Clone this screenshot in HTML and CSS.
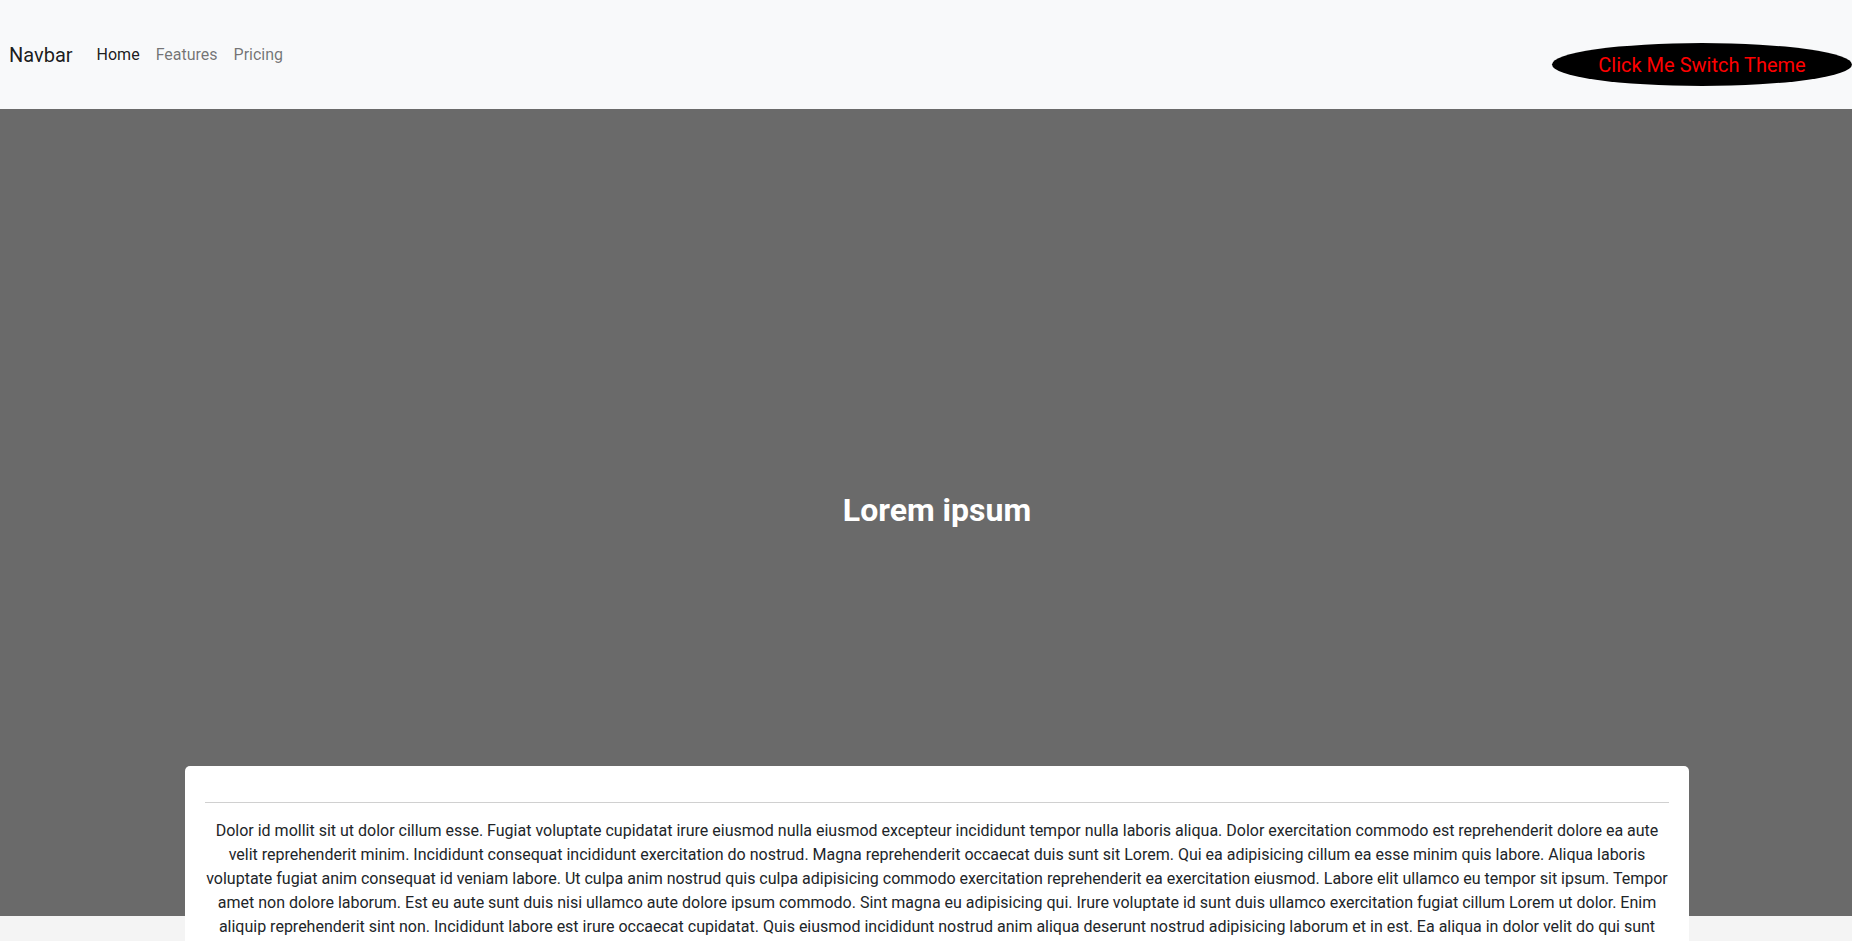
FILE: index.html
```html
<!DOCTYPE html>
<html lang="en">
<head>
<meta charset="utf-8">
<title>Navbar</title>
<link rel="stylesheet" href="styles.css">
</head>
<body>
<nav class="navbar">
  <div class="nav-left">
    <a class="brand" href="#">Navbar</a>
    <ul class="nav">
      <li><a class="nav-link active" href="#">Home</a></li>
      <li><a class="nav-link" href="#">Features</a></li>
      <li><a class="nav-link" href="#">Pricing</a></li>
    </ul>
  </div>
  <button class="theme-btn" type="button">Click Me Switch Theme</button>
</nav>
<section class="hero">
  <h1 class="hero-title">Lorem ipsum</h1>
</section>
<main class="content">
  <div class="card">
    <hr class="divider">
    <p class="card-text">Dolor id mollit sit ut dolor cillum esse. Fugiat voluptate cupidatat irure eiusmod nulla eiusmod excepteur incididunt tempor nulla laboris aliqua. Dolor exercitation commodo est reprehenderit dolore ea aute velit reprehenderit minim. Incididunt consequat incididunt exercitation do nostrud. Magna reprehenderit occaecat duis sunt sit Lorem. Qui ea adipisicing cillum ea esse minim quis labore. Aliqua laboris voluptate fugiat anim consequat id veniam labore. Ut culpa anim nostrud quis culpa adipisicing commodo exercitation reprehenderit ea exercitation eiusmod. Labore elit ullamco eu tempor sit ipsum. Tempor amet non dolore laborum. Est eu aute sunt duis nisi ullamco aute dolore ipsum commodo. Sint magna eu adipisicing qui. Irure voluptate id sunt duis ullamco exercitation fugiat cillum Lorem ut dolor. Enim aliquip reprehenderit sint non. Incididunt labore est irure occaecat cupidatat. Quis eiusmod incididunt nostrud anim aliqua deserunt nostrud adipisicing laborum et in est. Ea aliqua in dolor velit do qui sunt excepteur. Officia magna consequat nulla cillum proident. Nostrud ad sint labore ipsum laboris veniam consectetur aliquip commodo nulla.</p>
  </div>
</main>
</body>
</html>
```
FILE: styles.css
```css
html, body {
  margin: 0;
  padding: 0;
}
body {
  font-family: Roboto, "Liberation Sans", sans-serif;
  background: #f4f4f4;
  color: #212529;
  overflow-x: hidden;
}
.navbar {
  display: flex;
  align-items: center;
  justify-content: space-between;
  height: 109px;
  padding-left: 9px;
  background: #f8f9fa;
  box-sizing: border-box;
}
.nav-left {
  display: flex;
  align-items: center;
}
.brand {
  font-size: 20px;
  line-height: 30px;
  color: rgba(0, 0, 0, 0.9);
  text-decoration: none;
  margin-right: 16px;
}
.nav {
  display: flex;
  list-style: none;
  margin: 0;
  padding: 0;
}
.nav-link {
  display: block;
  padding: 0 8px;
  font-size: 16px;
  line-height: 24px;
  color: rgba(0, 0, 0, 0.55);
  text-decoration: none;
}
.nav-link.active {
  color: rgba(0, 0, 0, 0.9);
}
.theme-btn {
  width: 300px;
  height: 43px;
  margin-top: 20px;
  border: none;
  border-radius: 50%;
  background: #000;
  color: #f00;
  font-family: Roboto, "Liberation Sans", sans-serif;
  font-size: 20px;
  padding: 0;
  cursor: pointer;
}
.hero {
  height: 807px;
  background: #6a6a6a;
  display: flex;
  align-items: center;
  justify-content: center;
  padding-left: 22px;
  padding-bottom: 5px;
  box-sizing: border-box;
}
.hero-title {
  margin: 0;
  color: #fff;
  font-size: 32px;
  font-weight: 700;
  line-height: 38px;
}
.content {
  margin: -150px 163px 0 185px;
}
.card {
  background: #fff;
  border-radius: 5px;
  padding: 20px 20px 20px;
}
.divider {
  margin: 16px 0;
  border: 0;
  border-top: 1px solid #d0d0d0;
}
.card-text {
  margin: 0;
  text-align: center;
  font-size: 16px;
  line-height: 24px;
  color: #212529;
}
```
